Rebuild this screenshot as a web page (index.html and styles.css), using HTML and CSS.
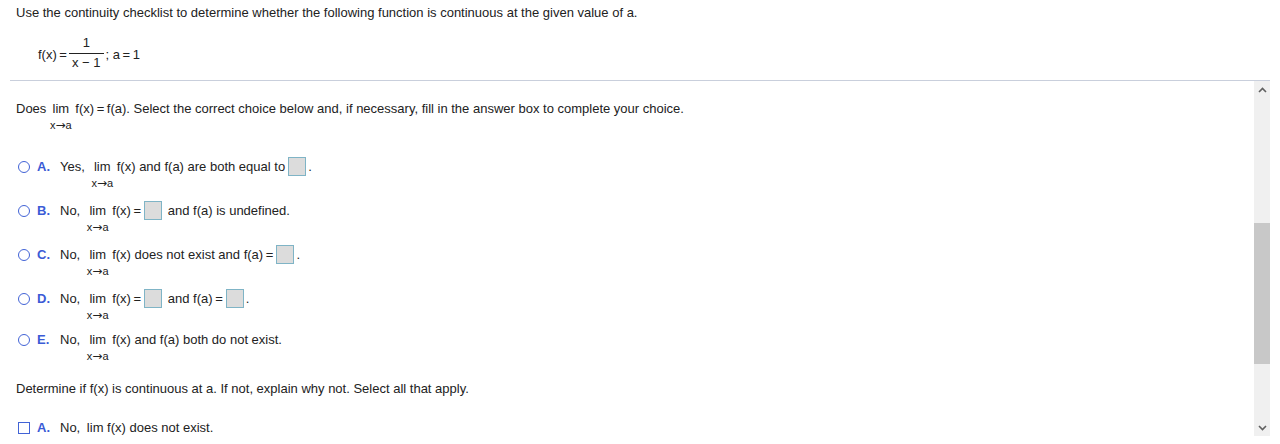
FILE: index.html
```html
<!DOCTYPE html>
<html lang="en">
<head>
    <meta charset="UTF-8">
    <title>Continuity Checklist</title>
    <link rel="stylesheet" href="styles.css">
</head>
<body>
    <div class="question">
        <p class="intro">Use the continuity checklist to determine whether the following function is continuous at the given value of a.</p>
        <div class="func">
            <span class="lhs">f(x)&thinsp;=</span>
            <span class="frac"><span class="num">1</span><span class="den">x − 1</span></span>
            <span class="lhs">; a&thinsp;=&thinsp;1</span>
        </div>
    </div>

    <div class="main">
        <div class="content">
            <div class="prompt">
                <span>Does</span>
                <span class="lim"><span>lim</span><span class="under">x<span class="arr">→</span>a</span></span> f(x)&thinsp;=&thinsp;f(a). Select the correct choice below and, if necessary, fill in the answer box to complete your choice.
            </div>

            <div class="option">
                <span class="radio"></span>
                <span class="letter">A.</span>
                <div class="text"><span class="yn">Yes,</span> <span class="lim"><span>lim</span><span class="under">x<span class="arr">→</span>a</span></span> f(x) and f(a) are both equal to<span class="box"></span>.</div>
            </div>
            <div class="option">
                <span class="radio"></span>
                <span class="letter">B.</span>
                <div class="text"><span class="yn">No,</span> <span class="lim"><span>lim</span><span class="under">x<span class="arr">→</span>a</span></span> f(x)&thinsp;=<span class="box"></span> and f(a) is undefined.</div>
            </div>
            <div class="option">
                <span class="radio"></span>
                <span class="letter">C.</span>
                <div class="text"><span class="yn">No,</span> <span class="lim"><span>lim</span><span class="under">x<span class="arr">→</span>a</span></span> f(x) does not exist and f(a)&thinsp;=<span class="box"></span>.</div>
            </div>
            <div class="option">
                <span class="radio"></span>
                <span class="letter">D.</span>
                <div class="text"><span class="yn">No,</span> <span class="lim"><span>lim</span><span class="under">x<span class="arr">→</span>a</span></span> f(x)&thinsp;=<span class="box"></span> and f(a)&thinsp;=<span class="box"></span>.</div>
            </div>
            <div class="option plain">
                <span class="radio"></span>
                <span class="letter">E.</span>
                <div class="text"><span class="yn">No,</span> <span class="lim"><span>lim</span><span class="under">x<span class="arr">→</span>a</span></span> f(x) and f(a) both do not exist.</div>
            </div>

            <p class="prompt2">Determine if f(x) is continuous at a. If not, explain why not. Select all that apply.</p>

            <div class="option plain">
                <span class="check"></span>
                <span class="letter">A.</span>
                <div class="text"><span class="yn">No,</span> <span class="lim"><span>lim</span></span> f(x) does not exist.</div>
            </div>
        </div>

        <div class="scrollbar">
            <div class="arrow">
                <svg width="9" height="6" viewBox="0 0 9 6"><path d="M1 5 L4.5 1.5 L8 5" fill="none" stroke="#606060" stroke-width="1.6"/></svg>
            </div>
            <div class="track"><div class="thumb"></div></div>
            <div class="arrow">
                <svg width="9" height="6" viewBox="0 0 9 6"><path d="M1 1 L4.5 4.5 L8 1" fill="none" stroke="#606060" stroke-width="1.6"/></svg>
            </div>
        </div>
    </div>
</body>
</html>
```

FILE: styles.css
```css
/* Reset */
* {
    margin: 0;
    padding: 0;
    box-sizing: border-box;
}

body {
    font-family: "Liberation Sans", Arial, sans-serif;
    font-size: 13px;
    color: #222;
    background: #fff;
    width: 1280px;
    height: 444px;
    overflow: hidden;
}

.question {
    height: 80px;
    padding: 5px 16px 0;
}

.intro {
    line-height: 16px;
}

.func {
    display: flex;
    align-items: center;
    margin: 14px 0 0 22px;
    line-height: 15px;
}

.func .lhs {
    padding-top: 3px;
}

.frac {
    display: inline-flex;
    flex-direction: column;
    align-items: center;
    margin: 0 2px;
}

.frac .num {
    align-self: stretch;
    text-align: center;
    border-bottom: 1px solid #222;
    padding-bottom: 3px;
}

.frac .den {
    padding: 1px 3px 0;
}

.main {
    display: flex;
    height: 356px;
    margin: 0 10px;
    border-top: 1px solid #c9cfdc;
}

.content {
    flex: 1;
    overflow: hidden;
    padding: 20px 0 0 6px;
    line-height: 16px;
}

.lim {
    display: inline-flex;
    flex-direction: column;
    align-items: center;
}

.lim .under {
    font-size: 11px;
    line-height: 12px;
    margin-top: 2px;
}

.arr {
    font-family: "DejaVu Sans", sans-serif;
    font-size: 12px;
}

.prompt {
    margin-bottom: 25px;
}

.option {
    display: flex;
    align-items: flex-start;
    padding-top: 3px;
    margin-bottom: 11px;
}

.option.plain {
    padding-top: 0;
}

.radio,
.check {
    width: 12px;
    height: 12px;
    margin: 2px 7px 0 2px;
    border: 1.5px solid #4263d6;
    flex-shrink: 0;
}

.radio {
    border-radius: 50%;
}

.letter {
    width: 23px;
    color: #3b5bd6;
    font-weight: bold;
}

.yn {
    margin-right: 3px;
}

.box {
    display: inline-block;
    width: 18px;
    height: 19px;
    margin: -3px 2px 0 3px;
    vertical-align: middle;
    background: #dcdcdc;
    border: 1px solid #7fb4c6;
}

.prompt2 {
    margin: 19px 0 23px;
}

/* Scrollbar */
.scrollbar {
    width: 16px;
    display: flex;
    flex-direction: column;
    background: #f0f0f0;
}

.arrow {
    height: 17px;
    display: flex;
    align-items: center;
    justify-content: center;
}

.track {
    flex: 1;
}

.thumb {
    margin-top: 125px;
    height: 141px;
    background: #c8c8c8;
}
```
